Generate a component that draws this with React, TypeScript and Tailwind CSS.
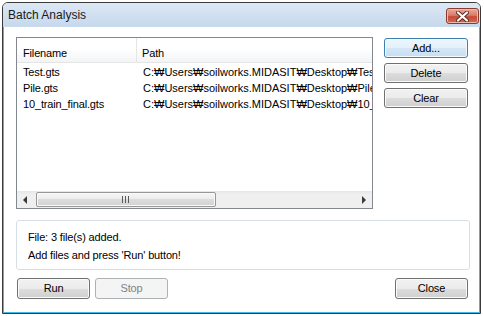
import React from "react";

const font = { fontFamily: '"Liberation Sans", "Noto Sans CJK KR", Arial, sans-serif' };

const rows = [
  ["Test.gts", "C:₩Users₩soilworks.MIDASIT₩Desktop₩Test.gts"],
  ["Pile.gts", "C:₩Users₩soilworks.MIDASIT₩Desktop₩Pile.gts"],
  ["10_train_final.gts", "C:₩Users₩soilworks.MIDASIT₩Desktop₩10_train_final.gts"],
];

function Btn({ children, w, kind = "normal" }: { children: React.ReactNode; w: string; kind?: "normal" | "default" | "disabled" }) {
  const base = "flex items-center justify-center rounded-[3px] border text-[11px] tracking-[-0.15px] " + w;
  if (kind === "default")
    return (
      <div className={base + " h-[20px] border-[#3c7fb1] text-black bg-[linear-gradient(to_bottom,#eef6fc_0%,#e4f0fa_50%,#d4e7f6_50%,#c6dff2_100%)] shadow-[inset_0_0_0_1px_#f4fafe]"}>
        {children}
      </div>
    );
  if (kind === "disabled")
    return (
      <div className={base + " h-[21px] border-[#adb2b5] text-[#838383] bg-[#f4f4f4]"}>{children}</div>
    );
  return (
    <div className={base + " border-[#707070] text-black bg-[linear-gradient(to_bottom,#f2f2f2_0%,#ebebeb_50%,#dddddd_50%,#cfcfcf_100%)] shadow-[inset_0_0_0_1px_#fbfbfb]"}>
      {children}
    </div>
  );
}

export default function App() {
  return (
    <div className="w-[484px] h-[316px] bg-white overflow-hidden" style={font}>
      <div className="ml-[2px] mt-[2px] w-[479px] h-[312px] border border-[#3a3a3a] rounded-t-[6px] flex flex-col overflow-hidden">
        {/* Title bar */}
        <div className="h-[24px] flex items-start bg-[linear-gradient(to_bottom,#dce8f5,#c6d8ec)] shrink-0">
          <div className="pl-[5px] pt-[5px] text-[12px] leading-[15px] text-[#1a1a1a]">Batch Analysis</div>
          <div className="ml-auto mr-[1px] mt-[5px] w-[33px] h-[16px] rounded-[3px] border border-[#8b3a2e] bg-[linear-gradient(to_bottom,#e8a899_0%,#d97d6b_45%,#c64a36_55%,#d36a55_100%)] flex items-center justify-center shadow-[inset_0_0_0_1px_#f0b8aa]">
            <svg width="13" height="11" viewBox="0 0 13 11">
              <path d="M2 1.5 L11 9.5 M11 1.5 L2 9.5" stroke="#5a2a24" strokeWidth="4" strokeLinecap="round" />
              <path d="M2 1.5 L11 9.5 M11 1.5 L2 9.5" stroke="#ffffff" strokeWidth="2.2" strokeLinecap="round" />
            </svg>
          </div>
        </div>
        {/* Body */}
        <div className="flex-1 bg-white border-x border-b border-[#45b8ea] pl-[12px] pt-[10px] flex flex-col">
          <div className="flex items-start">
            {/* List view */}
            <div className="w-[357px] h-[172px] border border-[#828790] flex flex-col overflow-hidden bg-white">
              <div className="h-[25px] shrink-0 flex border-b border-[#e5e5e5] bg-[linear-gradient(to_bottom,#ffffff_0%,#ffffff_45%,#f3f4f6_100%)] text-[11px] tracking-[-0.15px] text-black">
                <div className="w-[120px] shrink-0 pl-[6px] pt-[7px] border-r border-[#e5e5e5]">Filename</div>
                <div className="pl-[5px] pt-[7px]">Path</div>
              </div>
              <div className="flex-1 pt-[1px] overflow-hidden">
                {rows.map(([n, p]) => (
                  <div key={n} className="h-[16px] flex items-center text-[11px] text-black whitespace-nowrap">
                    <div className="w-[120px] shrink-0 pl-[6px] tracking-[-0.15px]">{n}</div>
                    <div className="pl-[6px] overflow-hidden">{p}</div>
                  </div>
                ))}
              </div>
              {/* Horizontal scrollbar */}
              <div className="h-[17px] shrink-0 flex items-center bg-[linear-gradient(to_bottom,#e6e6e6_0%,#f0f0f0_20%,#efefef_100%)]">
                <div className="w-[17px] h-[17px] flex items-center justify-center">
                  <svg width="5" height="8" viewBox="0 0 5 8"><path d="M4 0 L0 4 L4 8 Z" fill="#3a3a3a" /></svg>
                </div>
                <div className="ml-[2px] w-[180px] h-[15px] rounded-[2px] border border-[#979797] bg-[linear-gradient(to_bottom,#f6f6f6_0%,#ececec_50%,#dcdcdc_50%,#d2d2d2_100%)] shadow-[inset_0_0_0_1px_#fafafa] flex items-center justify-center">
                  <svg width="8" height="7" viewBox="0 0 8 7">
                    <path d="M0.5 0 V7 M3.5 0 V7 M6.5 0 V7" stroke="#5a5a5a" strokeWidth="1" />
                  </svg>
                </div>
                <div className="flex-1" />
                <div className="w-[17px] h-[17px] flex items-center justify-center">
                  <svg width="5" height="8" viewBox="0 0 5 8"><path d="M1 0 L5 4 L1 8 Z" fill="#3a3a3a" /></svg>
                </div>
              </div>
            </div>
            {/* Right buttons */}
            <div className="ml-[11px] w-[84px] flex flex-col gap-[5px] mt-[1px]">
              <Btn w="w-[84px]" kind="default">Add...</Btn>
              <Btn w="w-[84px] h-[20px]">Delete</Btn>
              <Btn w="w-[84px] h-[20px]">Clear</Btn>
            </div>
          </div>
          {/* Status */}
          <div className="mt-[11px] w-[454px] h-[50px] rounded-[3px] border border-[#d5dfe5] pl-[11px] pt-[7px] text-[11px] tracking-[-0.15px] leading-[18px] text-black">
            <div>File: 3 file(s) added.</div>
            <div>Add files and press 'Run' button!</div>
          </div>
          {/* Bottom buttons */}
          <div className="mt-[8px] ml-[1px] w-[451px] flex">
            <Btn w="w-[73px] h-[21px]">Run</Btn>
            <div className="ml-[5px]"><Btn w="w-[73px]" kind="disabled">Stop</Btn></div>
            <div className="flex-1" />
            <Btn w="w-[73px] h-[21px]">Close</Btn>
          </div>
        </div>
      </div>
    </div>
  );
}
